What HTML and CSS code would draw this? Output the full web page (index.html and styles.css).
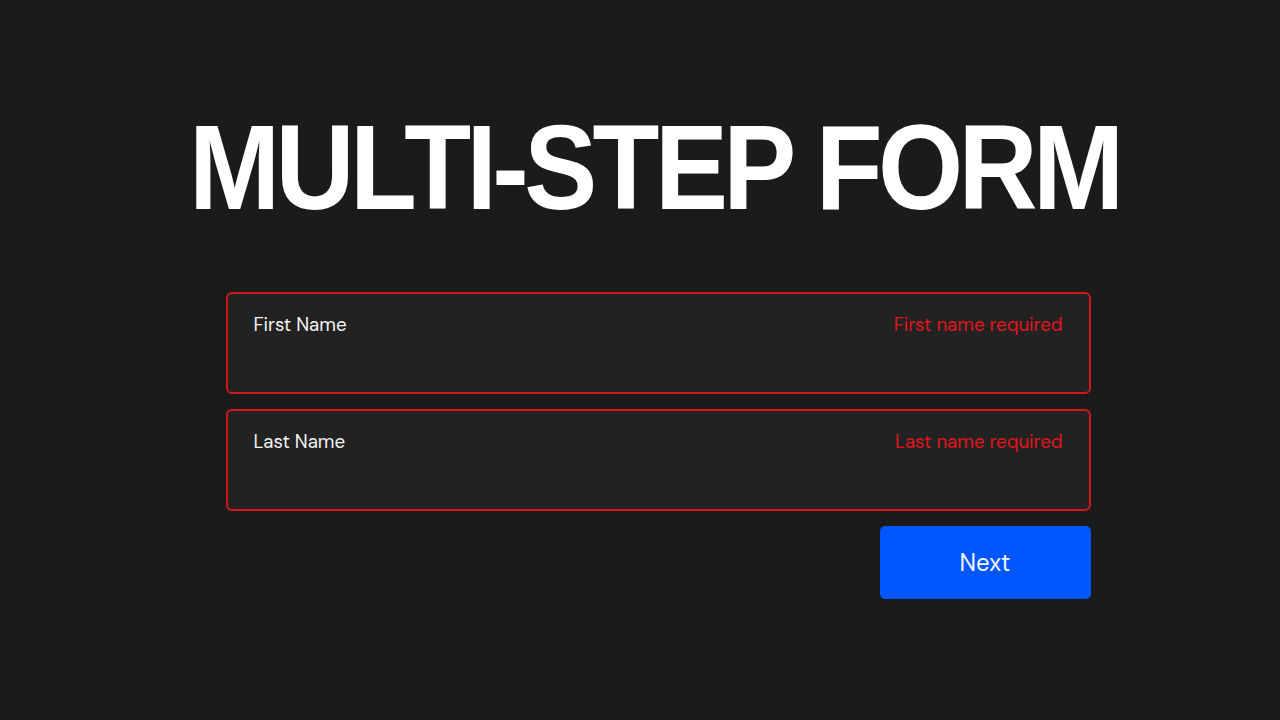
FILE: index.html
```html
<!DOCTYPE html>
<html lang="en">
<head>
<meta charset="utf-8">
<title>Multi-Step Form</title>
<link rel="stylesheet" href="styles.css">
</head>
<body>
<main class="page">
  <h1 class="title">MULTI-STEP FORM</h1>
  <form class="form" onsubmit="return false">
    <label class="field field--error">
      <span class="field__head">
        <span class="field__label">First Name</span>
        <span class="field__error">First name required</span>
      </span>
      <input class="field__input" type="text" name="firstName">
    </label>
    <label class="field field--error">
      <span class="field__head">
        <span class="field__label">Last Name</span>
        <span class="field__error">Last name required</span>
      </span>
      <input class="field__input" type="text" name="lastName">
    </label>
    <div class="form__actions">
      <button class="btn btn--primary" type="submit">Next</button>
    </div>
  </form>
</main>
</body>
</html>
```
FILE: styles.css
```css
* { box-sizing: border-box; }

html, body {
  margin: 0;
  height: 100%;
  background: #1b1b1b;
}

body {
  font-family: "DM Sans", Inter, "Noto Sans", sans-serif;
  color: #f2f2f2;
}

.page {
  display: flex;
  flex-direction: column;
  align-items: center;
  padding: 107px 0 0 28px;
}

/* Heavy, tightly tracked headline, narrowed like a semi-condensed grotesk cut */
.title {
  margin: 0;
  font-family: "Liberation Sans", Arial, sans-serif;
  font-weight: 700;
  font-size: 120px;
  line-height: 1;
  letter-spacing: -5px;
  color: #ffffff;
  white-space: nowrap;
  transform: scaleX(0.912);
}

.form {
  width: 865px;
  margin-top: 65px;
  margin-left: 8px;
  display: flex;
  flex-direction: column;
  gap: 15px;
}

.field {
  display: flex;
  flex-direction: column;
  height: 102px;
  padding: 19px 26px 0;
  background: #222222;
  border: 2px solid #d3161c;
  border-radius: 6px;
}

.field__head {
  display: flex;
  justify-content: space-between;
  font-size: 18.7px;
  line-height: 24px;
}

.field__label { color: #f4f4f4; }

.field__error { color: #e3141c; }

.field__input {
  margin-top: 8px;
  border: 0;
  outline: none;
  background: transparent;
  color: #f4f4f4;
  font: inherit;
  font-size: 18px;
  padding: 0;
}

.form__actions {
  display: flex;
  justify-content: flex-end;
}

.btn {
  width: 211px;
  height: 73px;
  border: 0;
  border-radius: 5px;
  font-family: inherit;
  font-size: 24px;
  cursor: pointer;
}

.btn--primary {
  background: #0057ff;
  color: #f2f6ff;
}
```
